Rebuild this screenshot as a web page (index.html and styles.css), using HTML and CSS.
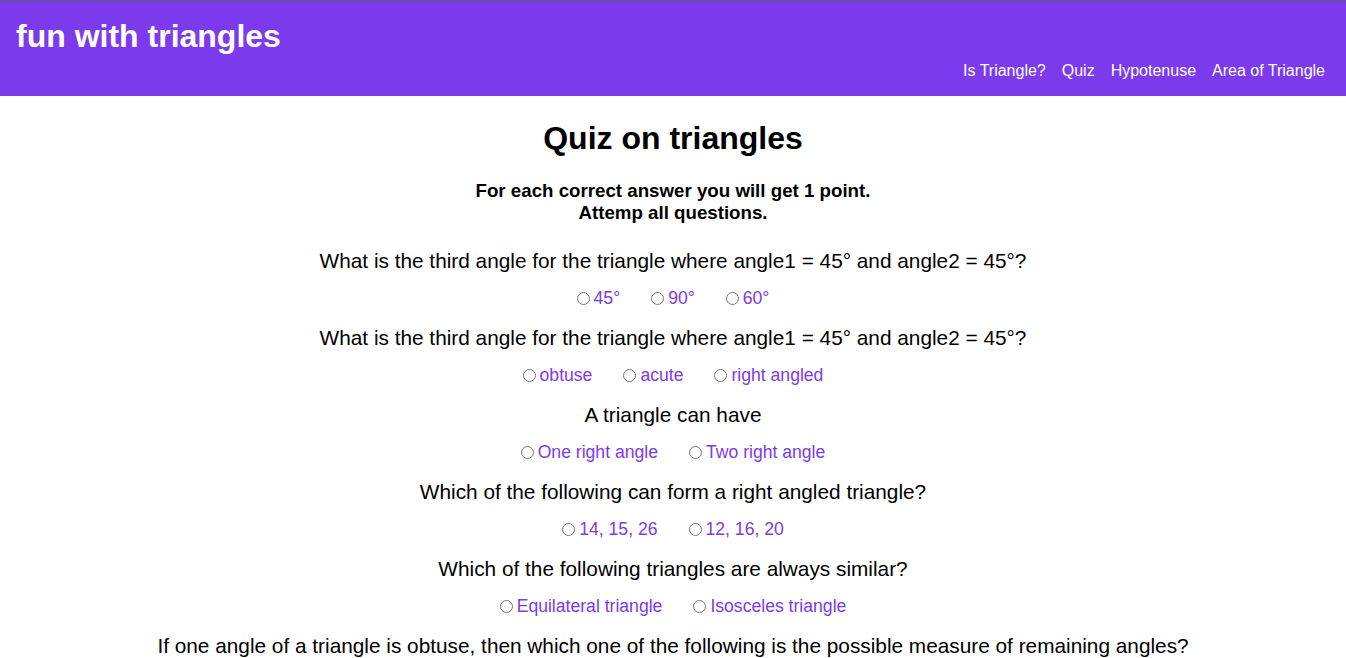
FILE: index.html
```html
<!DOCTYPE html>
<html>
<head>
<meta charset="utf-8">
<title>fun with triangles</title>
<link rel="stylesheet" href="styles.css">
</head>
<body>
<header class="site-header">
  <div class="brand">fun with triangles</div>
  <nav class="nav">
    <a href="#">Is Triangle?</a>
    <a href="#">Quiz</a>
    <a href="#">Hypotenuse</a>
    <a href="#">Area of Triangle</a>
  </nav>
</header>
<main class="quiz">
  <h1 class="title">Quiz on triangles</h1>
  <h3 class="intro">For each correct answer you will get 1 point.<br>Attemp all questions.</h3>
  <form class="questions">
    <div class="question">
      <p class="q-text">What is the third angle for the triangle where angle1 = 45° and angle2 = 45°?</p>
      <div class="options">
        <label class="opt"><input type="radio" name="q1"> 45°</label>
        <label class="opt"><input type="radio" name="q1"> 90°</label>
        <label class="opt"><input type="radio" name="q1"> 60°</label>
      </div>
    </div>
    <div class="question">
      <p class="q-text">What is the third angle for the triangle where angle1 = 45° and angle2 = 45°?</p>
      <div class="options">
        <label class="opt"><input type="radio" name="q2"> obtuse</label>
        <label class="opt"><input type="radio" name="q2"> acute</label>
        <label class="opt"><input type="radio" name="q2"> right angled</label>
      </div>
    </div>
    <div class="question">
      <p class="q-text">A triangle can have</p>
      <div class="options">
        <label class="opt"><input type="radio" name="q3"> One right angle</label>
        <label class="opt"><input type="radio" name="q3"> Two right angle</label>
      </div>
    </div>
    <div class="question">
      <p class="q-text">Which of the following can form a right angled triangle?</p>
      <div class="options">
        <label class="opt"><input type="radio" name="q4"> 14, 15, 26</label>
        <label class="opt"><input type="radio" name="q4"> 12, 16, 20</label>
      </div>
    </div>
    <div class="question">
      <p class="q-text">Which of the following triangles are always similar?</p>
      <div class="options">
        <label class="opt"><input type="radio" name="q5"> Equilateral triangle</label>
        <label class="opt"><input type="radio" name="q5"> Isosceles triangle</label>
      </div>
    </div>
    <div class="question">
      <p class="q-text">If one angle of a triangle is obtuse, then which one of the following is the possible measure of remaining angles?</p>
    </div>
  </form>
</main>
</body>
</html>
```
FILE: styles.css
```css
html, body {
  margin: 0;
  padding: 0;
  background: #ffffff;
  font-family: "Liberation Sans", Arial, sans-serif;
  color: #000;
}
.site-header {
  background: #7c3aed;
  border-top: 1px solid #5f5f6b;
  height: 95px;
  box-sizing: content-box;
  display: flex;
  flex-direction: column;
  padding: 0 21px 0 16px;
}
.brand {
  color: #fff;
  font-weight: bold;
  font-size: 32px;
  line-height: 34px;
  margin-top: 18px;
}
.nav {
  display: flex;
  justify-content: flex-end;
  gap: 16px;
  margin-top: 8px;
}
.nav a {
  color: #fff;
  text-decoration: none;
  font-size: 16px;
  line-height: 20px;
}
.quiz {
  text-align: center;
}
.title {
  font-size: 32px;
  font-weight: bold;
  margin: 24px 0 0;
  line-height: 37px;
}
.intro {
  font-weight: bold;
  font-size: 18.72px;
  line-height: 22px;
  margin: 23px 0 0;
}
.questions {
  margin-top: 9px;
}
.question {
  display: flex;
  flex-direction: column;
  align-items: center;
}
.q-text {
  font-size: 20.8px;
  line-height: 24px;
  margin: 0;
  padding: 16px 0 0;
}
.options {
  display: flex;
  justify-content: center;
  gap: 31px;
  margin-top: 13px;
  height: 24px;
}
.opt {
  color: #7c3aed;
  font-size: 17.6px;
  line-height: 24px;
  display: inline-flex;
  align-items: center;
}
.opt input {
  margin: 0 4px 0 0;
  width: 13px;
  height: 13px;
}
```
